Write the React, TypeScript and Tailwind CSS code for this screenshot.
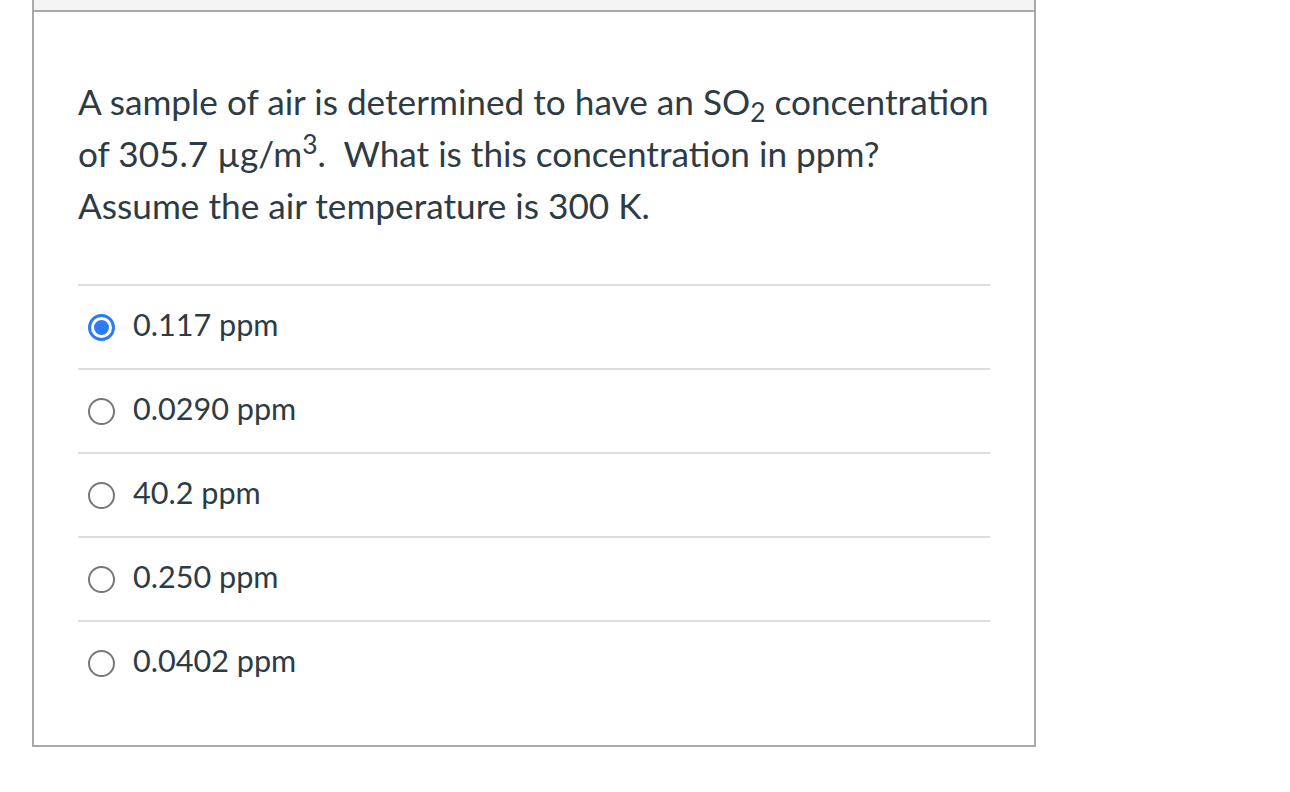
import React from "react";

const options = [
  { label: "0.117 ppm", selected: true },
  { label: "0.0290 ppm", selected: false },
  { label: "40.2 ppm", selected: false },
  { label: "0.250 ppm", selected: false },
  { label: "0.0402 ppm", selected: false },
];

function Radio({ selected }: { selected: boolean }) {
  if (selected) {
    return (
      <span className="flex h-[27px] w-[27px] shrink-0 items-center justify-center rounded-full border-[3px] border-[#2d7bf4] bg-white">
        <span className="h-[15px] w-[15px] rounded-full bg-[#2d7bf4]" />
      </span>
    );
  }
  return <span className="block h-[27px] w-[27px] shrink-0 rounded-full border-2 border-[#777777] bg-white" />;
}

export default function App() {
  return (
    <div className="min-h-[792px] w-full bg-white" style={{ fontFamily: "Lato, 'Noto Sans', sans-serif" }}>
      <div className="ml-[32px] w-[1004px] border-x-2 border-b-2 border-[#a9a9a9]">
        <div className="h-[12px] border-b-2 border-[#a9a9a9] bg-[#f4f4f4]" />
        <div className="px-[44px] pb-[41px] pt-[63px] text-[#2d3b45]">
          <p className="whitespace-nowrap text-[35.2px] leading-[52px]">
            A sample of air is determined to have an SO<sub>2</sub> concentration
            <br />
            of 305.7 µg/m<sup>3</sup>.&nbsp; What is this concentration in ppm?
            <br />
            Assume the air temperature is 300 K.
          </p>
          <div className="mt-[53px]">
            {options.map((o) => (
              <div key={o.label} className="flex h-[84px] items-center border-t-2 border-[#dddddd] pl-[10px]">
                <Radio selected={o.selected} />
                <span className="mb-[4px] ml-[18px] text-[30.6px] leading-none">{o.label}</span>
              </div>
            ))}
          </div>
        </div>
      </div>
    </div>
  );
}
